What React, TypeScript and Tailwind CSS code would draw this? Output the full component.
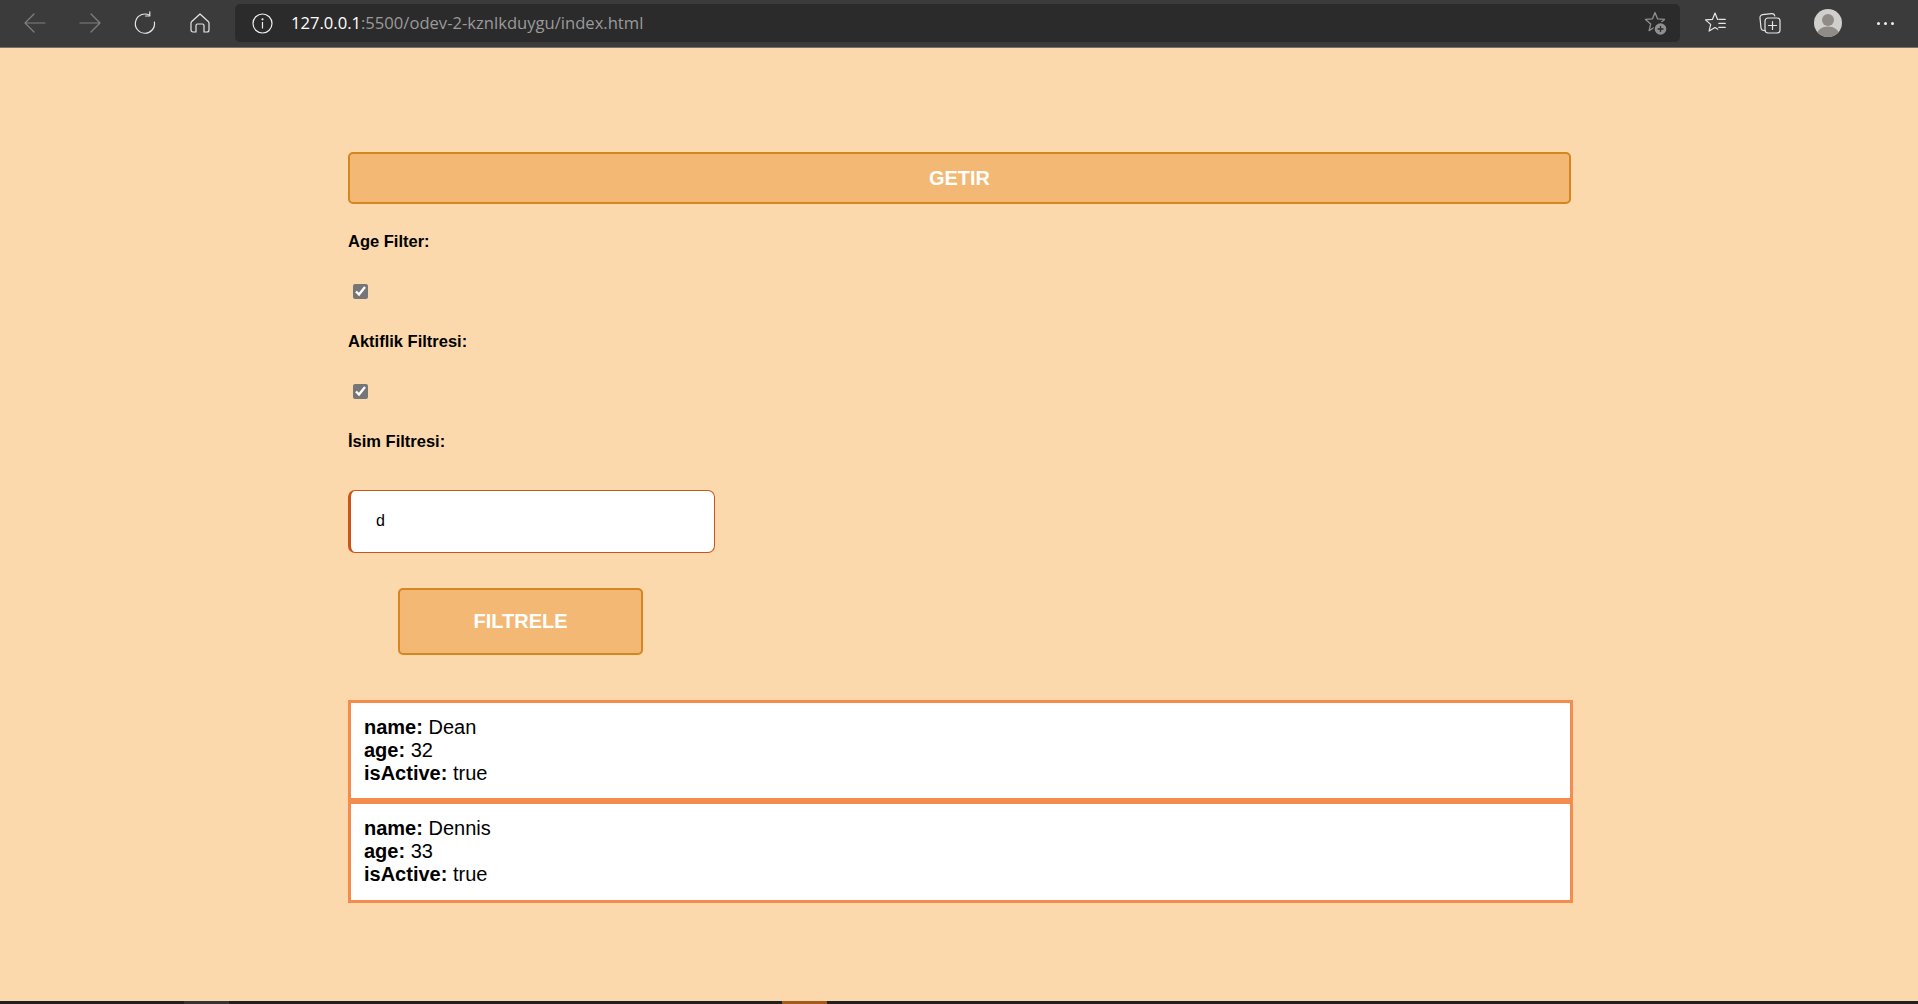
import React from "react";

const Stroke = ({ children, color = "#e6e6e6" }: { children: React.ReactNode; color?: string }) => (
  <svg width="24" height="24" viewBox="0 0 24 24" fill="none" stroke={color} strokeWidth="1.2" strokeLinecap="round" strokeLinejoin="round">
    {children}
  </svg>
);

const Slot = ({ children, className }: { children: React.ReactNode; className: string }) => (
  <div className={`flex items-center justify-center shrink-0 ${className}`}>{children}</div>
);

function Toolbar() {
  return (
    <header className="flex items-center h-[48px] pb-[1px] bg-[#3b3b3b] border-b border-[#77706a] shrink-0">
      <Slot className="w-[24px] ml-[23px]">
        <Stroke color="#808080"><path d="M22 12H2.5M11 3l-9 9 9 9" /></Stroke>
      </Slot>
      <Slot className="w-[24px] ml-[31px]">
        <Stroke color="#808080"><path d="M2 12h19.5M13 3l9 9-9 9" /></Stroke>
      </Slot>
      <Slot className="w-[24px] ml-[31px]">
        <Stroke><path d="M16.5 4.2A9.6 9.6 0 1 0 21.4 11" /><path d="M16.8 0.8v4.2h-4.2" /></Stroke>
      </Slot>
      <Slot className="w-[24px] ml-[31px]">
        <Stroke><path d="M12 3l8.5 7.8c.4.4.5.8.5 1.3V19a2 2 0 0 1-2 2h-3v-6.5a1.5 1.5 0 0 0-1.5-1.5h-5A1.5 1.5 0 0 0 8 14.5V21H5a2 2 0 0 1-2-2v-6.9c0-.5.2-.9.5-1.3z" /></Stroke>
      </Slot>
      <div className="flex items-center w-[1445px] h-[38px] ml-[23px] rounded-[5px] bg-[#2b2b2b] pr-[12px]">
        <Slot className="w-[22px] ml-[16px]">
          <svg width="21" height="21" viewBox="0 0 21 21" fill="none" stroke="#eeeeee" strokeWidth="1.2">
            <circle cx="10.5" cy="10.5" r="9.5" />
            <path d="M10.5 9v6.5" />
            <circle cx="10.5" cy="6.3" r="0.5" fill="#eeeeee" />
          </svg>
        </Slot>
        <div className="ml-[18px] text-[16.6px] leading-[22px] font-['Open_Sans','Noto_Sans',sans-serif] whitespace-nowrap">
          <span className="text-white">127.0.0.1</span>
          <span className="text-[#9a9a9a]">:5500/odev-2-kznlkduygu/index.html</span>
        </div>
        <Slot className="w-[24px] ml-auto">
          <svg width="24" height="24" viewBox="0 0 24 24" fill="none" stroke="#8f8f8f" strokeWidth="1.3" strokeLinejoin="round">
            <path d="M11 1.5L13.6 7.9L20.5 8.4L15.3 12.9L16.9 19.6L11 16L5.1 19.6L6.7 12.9L1.5 8.4L8.4 7.9Z" />
            <circle cx="16.5" cy="18" r="7.2" fill="#2b2b2b" stroke="none" />
            <circle cx="16.5" cy="18" r="5.8" fill="#8f8f8f" stroke="none" />
            <path d="M16.5 15v6M13.5 18h6" stroke="#2b2b2b" strokeWidth="1.3" />
          </svg>
        </Slot>
      </div>
      <Slot className="w-[24px] ml-[23px]">
        <Stroke>
          <path d="M12 2L14.6 8.4L21.5 8.9L16.3 13.4L17.9 20.1L12 16.5L6.1 20.1L7.7 13.4L2.5 8.9L9.4 8.4Z" />
          <rect x="15.2" y="6" width="9" height="18" fill="#3b3b3b" stroke="none" />
          <path d="M15.8 8.3h6.5M15.8 12.3h6.5M15.8 16.3h6.5" />
        </Stroke>
      </Slot>
      <Slot className="w-[24px] ml-[31px]">
        <Stroke>
          <path d="M7 19.5H6a3 3 0 0 1-3-2.5L2 7a3 3 0 0 1 2.6-3.4l9-1a3 3 0 0 1 3.2 2.4" />
          <rect x="7" y="7" width="15" height="15" rx="3" />
          <path d="M14.5 10.5v8M10.5 14.5h8" />
        </Stroke>
      </Slot>
      <Slot className="w-[28px] ml-[32px]">
        <svg width="28" height="28" viewBox="0 0 28 28">
          <clipPath id="avatarClip"><circle cx="14" cy="14" r="14" /></clipPath>
          <g clipPath="url(#avatarClip)">
            <rect width="28" height="28" fill="#d0cfcb" />
            <circle cx="14" cy="11" r="6" fill="#8f8c88" />
            <ellipse cx="14" cy="25" rx="11" ry="7.5" fill="#8f8c88" />
          </g>
        </svg>
      </Slot>
      <Slot className="w-[18px] ml-[34px] gap-[4px]">
        <span className="w-[3px] h-[3px] rounded-full bg-[#f0f0f0]" />
        <span className="w-[3px] h-[3px] rounded-full bg-[#f0f0f0]" />
        <span className="w-[3px] h-[3px] rounded-full bg-[#f0f0f0]" />
      </Slot>
    </header>
  );
}

const Label = ({ children, className }: { children: React.ReactNode; className: string }) => (
  <label className={`block h-[18px] leading-[18px] text-[16.5px] font-bold text-black ${className}`}>{children}</label>
);

const Check = () => (
  <input type="checkbox" checked readOnly className="block w-[15px] h-[15px] ml-[5px] mt-[34px] accent-[#767676]" />
);

const people = [
  { name: "Dean", age: 32, h: "h-[101px]" },
  { name: "Dennis", age: 33, h: "h-[102px]" },
];

export default function App() {
  return (
    <div className="flex flex-col h-[1004px] overflow-hidden bg-[#fcd9ad] font-['Liberation_Sans',Arial,sans-serif]">
      <Toolbar />
      <main className="flex-1 flex flex-col w-[1225px] ml-[348px] pt-[104px]">
        <button className="w-[1223px] h-[52px] rounded-[5px] border-2 border-[#d68620] bg-[#f3b874] text-white font-bold text-[20px] pb-[1px]">
          GETIR
        </button>
        <Label className="mt-[28px]">Age Filter:</Label>
        <Check />
        <Label className="mt-[33px]">Aktiflik Filtresi:</Label>
        <Check />
        <Label className="mt-[33px]">İsim Filtresi:</Label>
        <input
          value="d"
          readOnly
          className="mt-[40px] w-[367px] h-[63px] rounded-[7px] border border-l-[3px] border-[#cb5418] bg-white pl-[25px] pb-[2px] text-[16px] text-black outline-none"
        />
        <button className="mt-[35px] ml-[50px] w-[245px] h-[67px] rounded-[5px] border-2 border-[#d68620] bg-[#f3b874] text-white font-bold text-[20px] pb-[2px]">
          FILTRELE
        </button>
        <div className="mt-[45px] flex flex-col">
          {people.map((p) => (
            <div key={p.name} className={`${p.h} border-[3px] border-[#f58c4f] bg-white pt-[13px] pl-[13px] text-[20px] leading-[23px] text-black`}>
              <div><b>name:</b> {p.name}</div>
              <div><b>age:</b> {p.age}</div>
              <div><b>isActive:</b> true</div>
            </div>
          ))}
        </div>
      </main>
      <footer className="flex h-[3px] bg-[#202020] shrink-0">
        <div className="ml-[184px] w-[45px] bg-[#343434]" />
        <div className="ml-[553px] w-[45px] bg-[#a55a1c]" />
      </footer>
    </div>
  );
}
